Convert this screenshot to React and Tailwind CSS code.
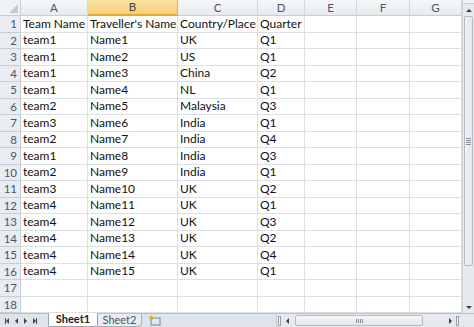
import React from 'react';

const cols = [
  { name: 'A', w: 'w-[67px]' },
  { name: 'B', w: 'w-[90px]' },
  { name: 'C', w: 'w-[80px]' },
  { name: 'D', w: 'w-[47px]' },
  { name: 'E', w: 'w-[52px]' },
  { name: 'F', w: 'w-[53px]' },
  { name: 'G', w: 'w-[52px]' },
];

const rows = [
  ['Team Name', "Traveller's Name", 'Country/Place', 'Quarter'],
  ['team1', 'Name1', 'UK', 'Q1'],
  ['team1', 'Name2', 'US', 'Q1'],
  ['team1', 'Name3', 'China', 'Q2'],
  ['team1', 'Name4', 'NL', 'Q1'],
  ['team2', 'Name5', 'Malaysia', 'Q3'],
  ['team3', 'Name6', 'India', 'Q1'],
  ['team2', 'Name7', 'India', 'Q4'],
  ['team1', 'Name8', 'India', 'Q3'],
  ['team2', 'Name9', 'India', 'Q1'],
  ['team3', 'Name10', 'UK', 'Q2'],
  ['team4', 'Name11', 'UK', 'Q1'],
  ['team4', 'Name12', 'UK', 'Q3'],
  ['team4', 'Name13', 'UK', 'Q2'],
  ['team4', 'Name14', 'UK', 'Q4'],
  ['team4', 'Name15', 'UK', 'Q1'],
  [],
  [],
];

const App = () => {
  return (
    <div className="w-[474px] h-[327px] overflow-hidden bg-white flex flex-col font-['Lato','Liberation_Sans',sans-serif] text-[12px] text-[#111]">
      <div className="flex flex-1 min-h-0">
        <div className="w-[462px] flex flex-col">
          {/* column headers */}
          <div className="flex h-[16px]">
            <div className="w-[21px] h-full bg-[#eef1f5] border-r border-b border-[#c9ced6] relative">
              <div className="absolute right-[2px] bottom-[2px] w-0 h-0 border-l-[9px] border-l-transparent border-b-[9px] border-b-[#c5cbd3]" />
            </div>
            {cols.map((c) => (
              <div
                key={c.name}
                className={`${c.w} h-full flex items-center justify-center border-r text-[11.5px] ${
                  c.name === 'B'
                    ? 'bg-gradient-to-b from-[#fbe3a4] to-[#f6cf72] border-[#e0b454] border-b-2 border-b-[#e3a93c] text-[#444]'
                    : 'bg-gradient-to-b from-[#f6f7f9] to-[#e7ebf0] border-[#d3d8de] border-b border-b-[#c9ced6] text-[#4c5566]'
                }`}
              >
                {c.name}
              </div>
            ))}
          </div>
          {rows.map((r, i) => (
            <div key={i} className="flex h-[16.5px]">
              <div className="w-[21px] h-full bg-[#e9edf2] border-r border-b border-[#c9ced6] flex items-center justify-end pr-[3px] text-[11.5px] text-[#4c5566]">
                {i + 1}
              </div>
              {cols.map((c, j) => (
                <div
                  key={c.name}
                  className={`${c.w} h-full border-r border-b border-[#dcdfe3] flex items-center pl-[2px] whitespace-nowrap overflow-visible`}
                >
                  {r[j] || ''}
                </div>
              ))}
            </div>
          ))}
        </div>
        {/* vertical scrollbar */}
        <div className="w-[12px] bg-[#e6e9ee] border-l border-[#d0d4da] flex flex-col items-center">
          <div className="h-[4px] w-full bg-[#f3f4f6] border-b border-[#c6cbd2]" />
          <div className="h-[12px] flex items-center justify-center">
            <div className="w-0 h-0 border-l-[3px] border-r-[3px] border-b-[3px] border-l-transparent border-r-transparent border-b-[#3a3f47]" />
          </div>
          <div className="w-[9px] h-[250px] bg-gradient-to-r from-[#f3f4f6] to-[#e4e7eb] border border-[#b5bbc4] rounded-[2px] flex items-center justify-center">
            <div className="flex flex-col gap-[1px]">
              <div className="w-[5px] h-px bg-[#8a909a]" />
              <div className="w-[5px] h-px bg-[#8a909a]" />
              <div className="w-[5px] h-px bg-[#8a909a]" />
              <div className="w-[5px] h-px bg-[#8a909a]" />
            </div>
          </div>
          <div className="flex-1" />
          <div className="h-[12px] flex items-center justify-center">
            <div className="w-0 h-0 border-l-[3px] border-r-[3px] border-t-[3px] border-l-transparent border-r-transparent border-t-[#3a3f47]" />
          </div>
        </div>
      </div>
      {/* sheet tab bar */}
      <div className="h-[14px] flex items-stretch bg-[#dfe4ea] border-t border-[#b9c0c9] text-[11px]">
        <div className="w-[48px] flex items-center gap-[6px] pl-[5px] text-[#3e4650]">
          <div className="flex items-center">
            <div className="w-px h-[6px] bg-[#3e4650]" />
            <div className="w-0 h-0 border-t-[3px] border-b-[3px] border-r-[3px] border-t-transparent border-b-transparent border-r-[#3e4650]" />
          </div>
          <div className="w-0 h-0 border-t-[3px] border-b-[3px] border-r-[3px] border-t-transparent border-b-transparent border-r-[#3e4650]" />
          <div className="w-0 h-0 border-t-[3px] border-b-[3px] border-l-[3px] border-t-transparent border-b-transparent border-l-[#3e4650]" />
          <div className="flex items-center">
            <div className="w-0 h-0 border-t-[3px] border-b-[3px] border-l-[3px] border-t-transparent border-b-transparent border-l-[#3e4650]" />
            <div className="w-px h-[6px] bg-[#3e4650]" />
          </div>
        </div>
        <div className="w-[50px] -mt-px bg-white border-x border-b border-[#9aa3ae] flex items-center justify-center font-bold text-[#222] rounded-b-[2px]">
          Sheet1
        </div>
        <div className="w-[44px] bg-[#e9edf2] border-r border-b border-[#aab2bc] flex items-center justify-center text-[#4c5566] rounded-br-[4px]">
          Sheet2
        </div>
        <div className="w-[26px] flex items-center justify-center">
          <svg width="14" height="11" viewBox="0 0 14 11">
            <rect x="3" y="3" width="9" height="7" fill="#dfe8f4" stroke="#6b86ad" strokeWidth="1" />
            <circle cx="3.5" cy="3" r="2.3" fill="#f4c542" />
            <path d="M3.5 0.5v5M1 3h5" stroke="#e49a1d" strokeWidth="0.8" />
          </svg>
        </div>
        <div className="flex-1" />
        <div className="w-[186px] flex items-center bg-[#e6e9ee] border-l border-[#c6cbd2]">
          <div className="w-[3px] h-[10px] border border-[#9aa1ab] bg-[#f4f5f7] ml-[1px]" />
          <div className="w-[12px] flex items-center justify-center">
            <div className="w-0 h-0 border-t-[3px] border-b-[3px] border-r-[3px] border-t-transparent border-b-transparent border-r-[#3a3f47]" />
          </div>
          <div className="w-[128px] h-[11px] ml-[2px] bg-gradient-to-b from-[#f6f7f9] to-[#e2e6eb] border border-[#b5bbc4] rounded-[2px] flex items-center justify-center gap-[1px]">
            <div className="w-px h-[4px] bg-[#8a909a]" />
            <div className="w-px h-[4px] bg-[#8a909a]" />
            <div className="w-px h-[4px] bg-[#8a909a]" />
            <div className="w-px h-[4px] bg-[#8a909a]" />
          </div>
          <div className="flex-1" />
          <div className="w-[12px] flex items-center justify-center">
            <div className="w-0 h-0 border-t-[3px] border-b-[3px] border-l-[3px] border-t-transparent border-b-transparent border-l-[#3a3f47]" />
          </div>
          <div className="w-[3px] h-[10px] border border-[#9aa1ab] bg-[#f4f5f7] mr-[3px]" />
        </div>
        <div className="w-[12px] bg-[#e6e9ee]" />
      </div>
    </div>
  );
};

export default App;
